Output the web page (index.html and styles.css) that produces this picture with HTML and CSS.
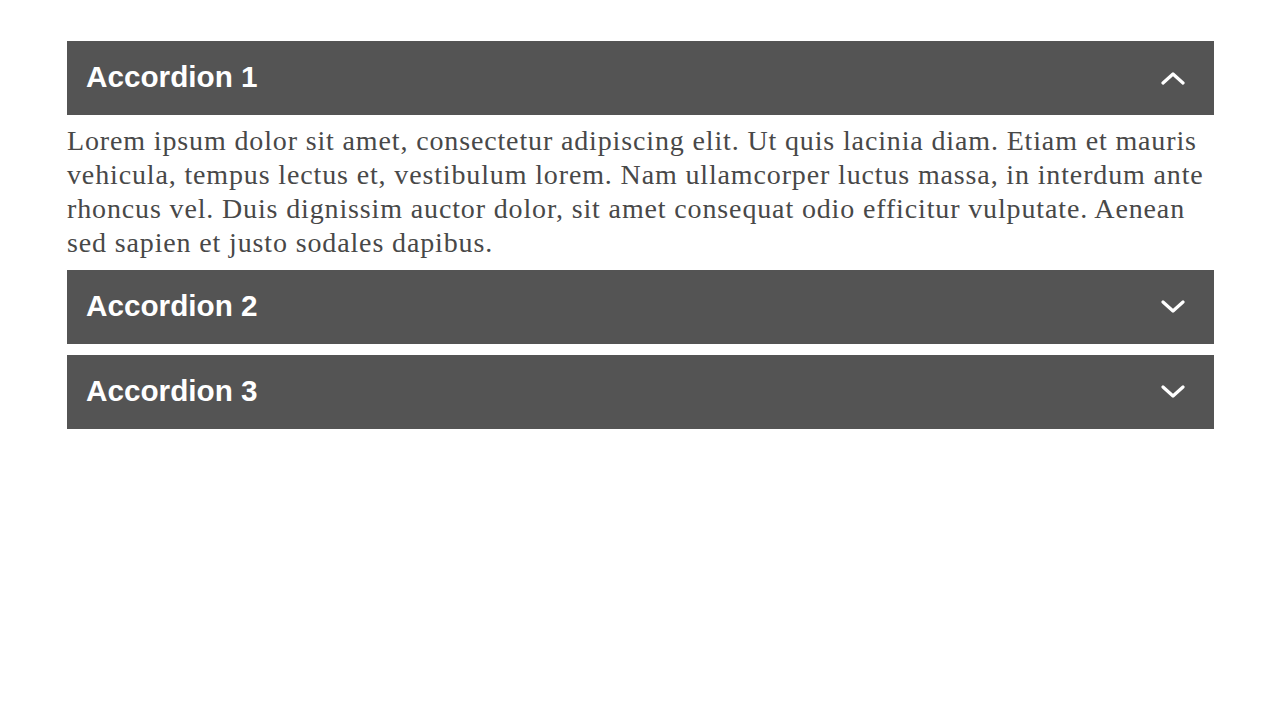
FILE: index.html
```html
<!DOCTYPE html>
<html>
<head>
<meta charset="utf-8">
<link rel="stylesheet" href="styles.css">
</head>
<body>
<div class="accordion">
  <div class="item open">
    <div class="header">
      <span class="title">Accordion 1</span>
      <svg class="chev" width="24" height="14" viewBox="0 0 24 14"><path d="M2 12 L12 3 L22 12" fill="none" stroke="#fff" stroke-width="3.2" stroke-linecap="round" stroke-linejoin="round"/></svg>
    </div>
    <div class="content">Lorem ipsum dolor sit amet, consectetur adipiscing elit. Ut quis lacinia diam. Etiam et mauris vehicula, tempus lectus et, vestibulum lorem. Nam ullamcorper luctus massa, in interdum ante rhoncus vel. Duis dignissim auctor dolor, sit amet consequat odio efficitur vulputate. Aenean sed sapien et justo sodales dapibus.</div>
  </div>
  <div class="item">
    <div class="header">
      <span class="title">Accordion 2</span>
      <svg class="chev" width="24" height="14" viewBox="0 0 24 14"><path d="M2 2 L12 11 L22 2" fill="none" stroke="#fff" stroke-width="3.2" stroke-linecap="round" stroke-linejoin="round"/></svg>
    </div>
  </div>
  <div class="item">
    <div class="header">
      <span class="title">Accordion 3</span>
      <svg class="chev" width="24" height="14" viewBox="0 0 24 14"><path d="M2 2 L12 11 L22 2" fill="none" stroke="#fff" stroke-width="3.2" stroke-linecap="round" stroke-linejoin="round"/></svg>
    </div>
  </div>
</div>
</body>
</html>
```
FILE: styles.css
```css
html, body {
  margin: 0;
  padding: 0;
  background: #fff;
}
.accordion {
  margin: 41px 66px 0 67px;
  display: flex;
  flex-direction: column;
  gap: 11px;
}
.item {
  display: flex;
  flex-direction: column;
}
.header {
  height: 74px;
  background: #545454;
  display: flex;
  align-items: center;
  justify-content: space-between;
  padding: 0 29px 0 19px;
  box-sizing: border-box;
}
.title {
  font-family: "Liberation Sans", Arial, sans-serif;
  font-weight: bold;
  font-size: 29.7px;
  color: #fff;
  margin-top: -2px;
}
.chev {
  display: block;
}
.content {
  font-family: "Liberation Serif", "Times New Roman", serif;
  font-size: 28px;
  letter-spacing: 0.86px;
  line-height: 34px;
  color: #484848;
  padding: 9px 0 10px;
}
.item.open + .item {
  margin-top: -11px;
}
```
